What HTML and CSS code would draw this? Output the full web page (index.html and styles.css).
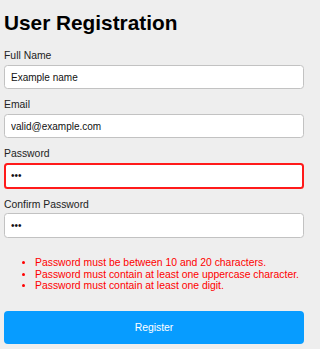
FILE: index.html
```html
<!DOCTYPE html>
<html lang="en">
<head>
<meta charset="utf-8">
<title>User Registration</title>
<link rel="stylesheet" href="styles.css">
</head>
<body>
<main class="page">
  <h1 class="title">User Registration</h1>
  <form class="form">
    <div class="field">
      <label class="label" for="name">Full Name</label>
      <input class="input" id="name" type="text" value="Example name">
    </div>
    <div class="field">
      <label class="label" for="email">Email</label>
      <input class="input" id="email" type="email" value="valid@example.com">
    </div>
    <div class="field">
      <label class="label" for="pw">Password</label>
      <input class="input input-error" id="pw" type="password" value="abc">
    </div>
    <div class="field">
      <label class="label" for="pw2">Confirm Password</label>
      <input class="input" id="pw2" type="password" value="abc">
    </div>
    <ul class="errors">
      <li>Password must be between 10 and 20 characters.</li>
      <li>Password must contain at least one uppercase character.</li>
      <li>Password must contain at least one digit.</li>
    </ul>
    <button class="button" type="button">Register</button>
  </form>
</main>
</body>
</html>
```
FILE: styles.css
```css
html, body {
  margin: 0;
  padding: 0;
  background: #eeeeee;
}
body {
  font-family: "Liberation Sans", Arial, sans-serif;
  color: #222;
}
.page {
  padding: 11px 7px 0 4px;
}
.title {
  margin: 0 0 15.3px;
  font-size: 20.8px;
  line-height: 24px;
  font-weight: bold;
  color: #000;
}
.form {
  display: flex;
  flex-direction: column;
}
.field {
  display: flex;
  flex-direction: column;
  margin-bottom: 10px;
}
.label {
  font-size: 10.4px;
  line-height: 12px;
  margin-bottom: 2.6px;
  color: #222;
}
.input {
  box-sizing: border-box;
  width: 300px;
  height: 24.5px;
  margin: 0;
  padding: 0 6px;
  border: 1px solid #c2c2c2;
  border-radius: 3.5px;
  background: #fff;
  font-family: "Liberation Sans", Arial, sans-serif;
  font-size: 10px;
  color: #111;
  outline: none;
}
.input-error {
  border: 2px solid #ff1a1a;
  padding: 0 5px;
  height: 25.5px;
}
.errors {
  margin: 9.5px 0 19px;
  padding: 0 0 0 31px;
  color: #ff0000;
  font-size: 10.4px;
  line-height: 11.6px;
}
.button {
  box-sizing: border-box;
  width: 300px;
  height: 33px;
  margin: 0;
  border: none;
  border-radius: 4px;
  background: #079cff;
  color: #fff;
  font-family: "Liberation Sans", Arial, sans-serif;
  font-size: 10.4px;
}
```
